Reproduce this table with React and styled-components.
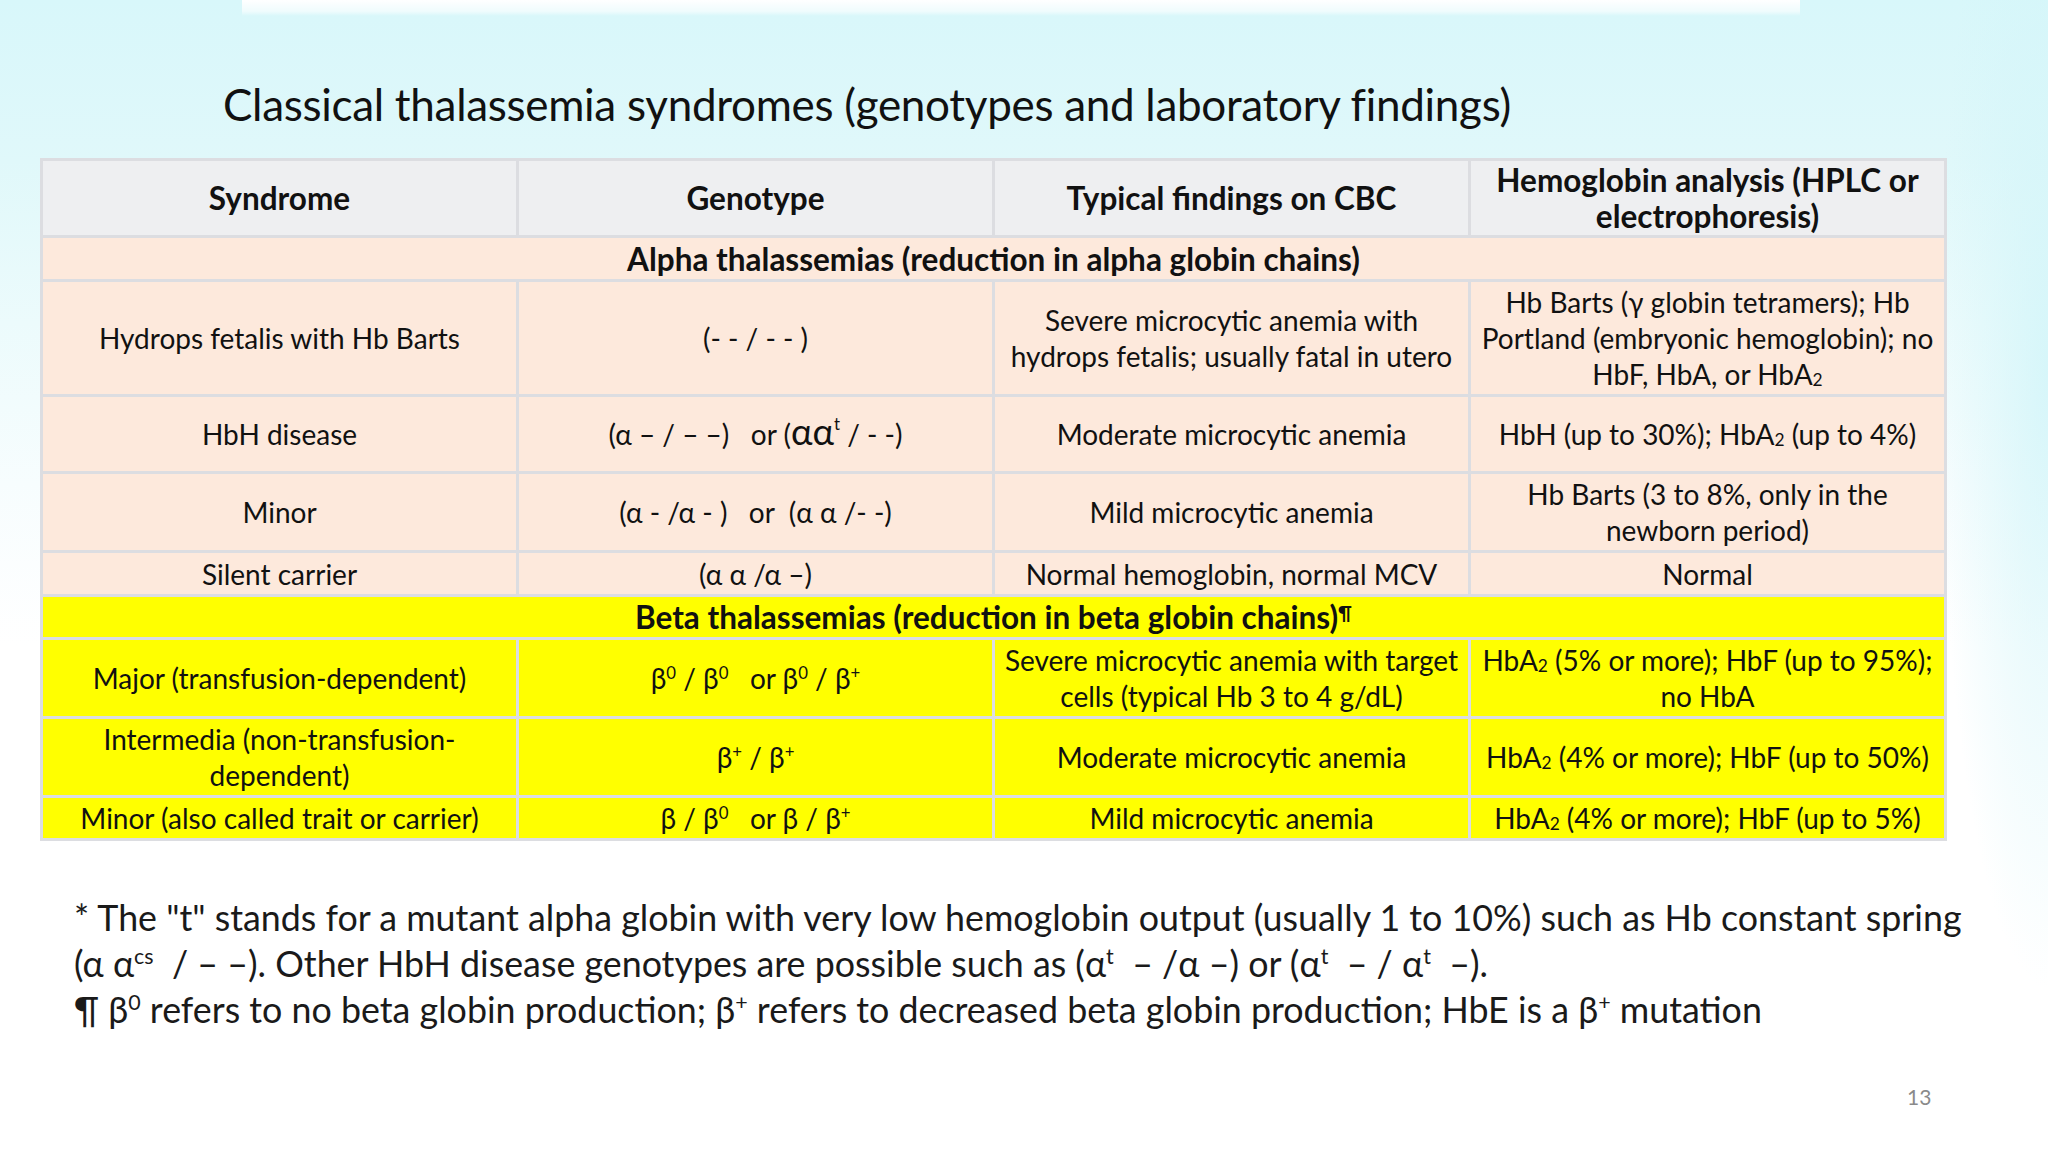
import React from "react";
import styled, { createGlobalStyle } from "styled-components";

const GILL = `"Lato", "Open Sans", sans-serif`;
const CALIBRI = `"Lato", "Noto Sans", sans-serif`;

const GlobalStyle = createGlobalStyle`
  html, body {
    margin: 0;
    padding: 0;
    background: #ffffff;
  }
  #root {
    width: 2048px;
    height: 1152px;
    overflow: hidden;
  }
`;

const Slide = styled.div`
  position: relative;
  width: 2048px;
  height: 1152px;
  box-sizing: border-box;
  background:
    radial-gradient(ellipse 110px 620px at 100% 32%, rgba(210, 245, 249, 0.85), rgba(210, 245, 249, 0) 100%),
    linear-gradient(180deg, #d8f7fa 0%, #e0f8fa 14%, #ecfbfc 28%, #f7fdfe 42%, #ffffff 56%);
  display: flex;
  flex-direction: column;
`;

const Glare = styled.div`
  height: 16px;
  margin: 0 248px 0 242px;
  background: linear-gradient(180deg, #ffffff 0%, rgba(255,255,255,0.6) 70%, rgba(255,255,255,0) 100%);
`;

const Title = styled.h1`
  margin: 60px 0 0 223px;
  font-family: ${GILL};
  font-weight: 400;
  font-size: 44px;
  line-height: 56px;
  color: #111;
  letter-spacing: -0.3px;
`;

const Table = styled.table`
  margin: 26px 0 0 40px;
  width: 1907px;
  border-collapse: collapse;
  table-layout: fixed;
  font-family: ${GILL};
  color: #111;
`;

const Row = styled.tr`
  height: ${p => p.h}px;
  background: ${p =>
    p.kind === "head" ? "#eeeff1" : p.kind === "beta" ? "#ffff00" : "#fde9dc"};
`;

const Cell = styled.td`
  border: 3px solid #dcdde1;
  padding: 0 6px;
  text-align: center;
  vertical-align: middle;
  font-size: ${p => (p.bold ? 31.5 : 28)}px;
  line-height: 36px;
  font-weight: ${p => (p.bold ? 700 : 400)};
`;

const Sup = styled.sup`
  font-size: 60%;
  line-height: 0;
  vertical-align: ${p => p.raise || "0.6em"};
`;

const Sub = styled.span`
  font-size: 62%;
  line-height: 0;
  vertical-align: -0.05em;
`;

const Big = styled.span`
  font-size: 130%;
  line-height: 0;
`;

const Notes = styled.div`
  margin: 54px 0 0 74px;
  font-family: ${CALIBRI};
  font-size: 35.8px;
  line-height: 46px;
  color: #1a1a1a;
`;

const NoteLine = styled.div`
  white-space: nowrap;
`;

const NoteSup = styled.sup`
  font-size: 60%;
  line-height: 0;
  vertical-align: 0.6em;
`;

const PageNumber = styled.div`
  position: absolute;
  left: 1907px;
  top: 1084px;
  font-family: ${CALIBRI};
  font-size: 21px;
  color: #8a8a8a;
`;

const A = "\u03b1";
const B = "\u03b2";
const D = "\u2013";

const rows = [
  {
    kind: "alpha",
    h: 115,
    cells: [
      "Hydrops fetalis with Hb Barts",
      "(- - / - - )",
      <>Severe microcytic anemia with<br />hydrops fetalis; usually fatal in utero</>,
      <>Hb Barts (&gamma; globin tetramers); Hb Portland (embryonic hemoglobin); no HbF, HbA, or HbA<Sub>2</Sub></>
    ]
  },
  {
    kind: "alpha",
    h: 77,
    cells: [
      "HbH disease",
      <>({A} {D} / {D} {D})&nbsp;&nbsp; or (<Big>{A}{A}</Big><Sup raise="0.9em">t</Sup> / - -)</>,
      "Moderate microcytic anemia",
      <>HbH (up to 30%); HbA<Sub>2</Sub> (up to 4%)</>
    ]
  },
  {
    kind: "alpha",
    h: 79,
    cells: [
      "Minor",
      <>({A} - /{A} - )&nbsp;&nbsp; or&nbsp; ({A} {A} /- -)</>,
      "Mild microcytic anemia",
      <>Hb Barts (3 to 8%, only in the<br />newborn period)</>
    ]
  },
  {
    kind: "alpha",
    h: 44,
    cells: [
      "Silent carrier",
      <>({A} {A} /{A} {D})</>,
      "Normal hemoglobin, normal MCV",
      "Normal"
    ]
  }
];

const betaRows = [
  {
    kind: "beta",
    h: 79,
    cells: [
      "Major (transfusion-dependent)",
      <>{B}<Sup>0</Sup> / {B}<Sup>0</Sup>&nbsp;&nbsp; or {B}<Sup>0</Sup> / {B}<Sup>+</Sup></>,
      <>Severe microcytic anemia with target<br />cells (typical Hb 3 to 4 g/dL)</>,
      <>HbA<Sub>2</Sub> (5% or more); HbF (up to 95%);<br />no HbA</>
    ]
  },
  {
    kind: "beta",
    h: 79,
    cells: [
      <>Intermedia (non-transfusion-<br />dependent)</>,
      <>{B}<Sup>+</Sup> / {B}<Sup>+</Sup></>,
      "Moderate microcytic anemia",
      <>HbA<Sub>2</Sub> (4% or more); HbF (up to 50%)</>
    ]
  },
  {
    kind: "beta",
    h: 43,
    cells: [
      "Minor (also called trait or carrier)",
      <>{B} / {B}<Sup>0</Sup>&nbsp;&nbsp; or {B} / {B}<Sup>+</Sup></>,
      "Mild microcytic anemia",
      <>HbA<Sub>2</Sub> (4% or more); HbF (up to 5%)</>
    ]
  }
];

const BodyRow = ({ row }) => (
  <Row kind={row.kind} h={row.h}>
    {row.cells.map((c, i) => (
      <Cell key={i}>{c}</Cell>
    ))}
  </Row>
);

export default function App() {
  return (
    <>
      <GlobalStyle />
      <Slide>
        <Glare />
        <Title>Classical thalassemia syndromes (genotypes and laboratory findings)</Title>
        <Table>
          <tbody>
            <Row kind="head" h={77}>
              <Cell bold>Syndrome</Cell>
              <Cell bold>Genotype</Cell>
              <Cell bold>Typical findings on CBC</Cell>
              <Cell bold>Hemoglobin analysis (HPLC or electrophoresis)</Cell>
            </Row>
            <Row kind="alpha" h={44}>
              <Cell bold colSpan={4}>Alpha thalassemias (reduction in alpha globin chains)</Cell>
            </Row>
            {rows.map((r, i) => (
              <BodyRow row={r} key={`a-${i}`} />
            ))}
            <Row kind="beta" h={43}>
              <Cell bold colSpan={4}>
                Beta thalassemias (reduction in beta globin chains)<Sup raise="0.5em">&para;</Sup>
              </Cell>
            </Row>
            {betaRows.map((r, i) => (
              <BodyRow row={r} key={`b-${i}`} />
            ))}
          </tbody>
        </Table>
        <Notes>
          <NoteLine>
            * The "t" stands for a mutant alpha globin with very low hemoglobin output (usually 1 to 10%) such as Hb constant spring
          </NoteLine>
          <NoteLine>
            ({A} {A}<NoteSup>cs</NoteSup>&nbsp; / {D} {D}). Other HbH disease genotypes are possible such as ({A}<NoteSup>t</NoteSup>&nbsp; {D} /{A} {D}) or ({A}<NoteSup>t</NoteSup>&nbsp; {D} / {A}<NoteSup>t</NoteSup>&nbsp; {D}).
          </NoteLine>
          <NoteLine>
            &para; {B}<NoteSup>0</NoteSup> refers to no beta globin production; {B}<NoteSup>+</NoteSup> refers to decreased beta globin production; HbE is a {B}<NoteSup>+</NoteSup> mutation
          </NoteLine>
        </Notes>
        <PageNumber>13</PageNumber>
      </Slide>
    </>
  );
}
